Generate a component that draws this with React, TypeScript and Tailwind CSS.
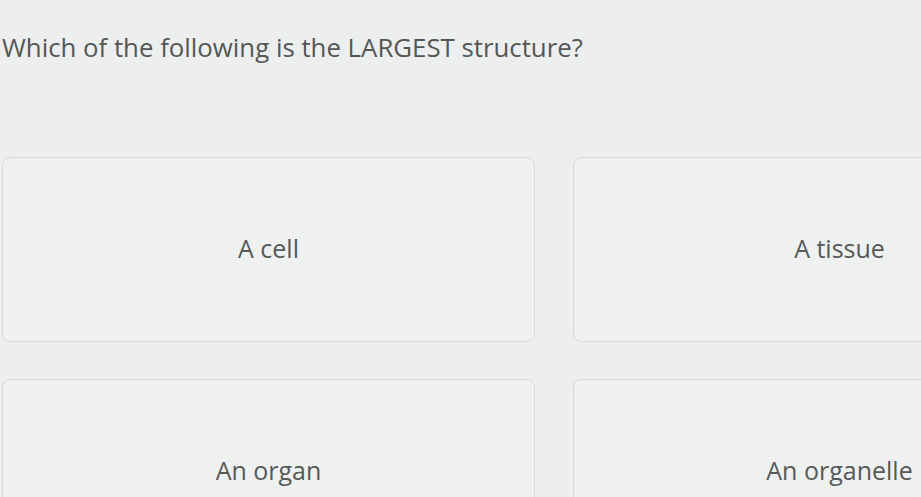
const options = ["A cell", "A tissue", "An organ", "An organelle"];

export default function App() {
  return (
    <div
      className="h-[497px] w-[921px] overflow-hidden bg-[#edefee] text-[#535756]"
      style={{ fontFamily: '"Open Sans", "Noto Sans", sans-serif' }}
    >
      <h1 className="pl-[2px] pt-[30px] text-[25.8px] leading-[34px] font-normal">
        Which of the following is the LARGEST structure?
      </h1>

      <div className="ml-[2px] mt-[93px] grid w-[1104px] grid-cols-2 gap-x-[38px] gap-y-[37px]">
        {options.map((label) => (
          <button
            key={label}
            className="flex h-[185px] items-center justify-center rounded-lg border border-[#d7dad8] bg-[#eff1f0] pb-[2px] text-[25px] text-[#555958]"
          >
            {label}
          </button>
        ))}
      </div>
    </div>
  );
}
